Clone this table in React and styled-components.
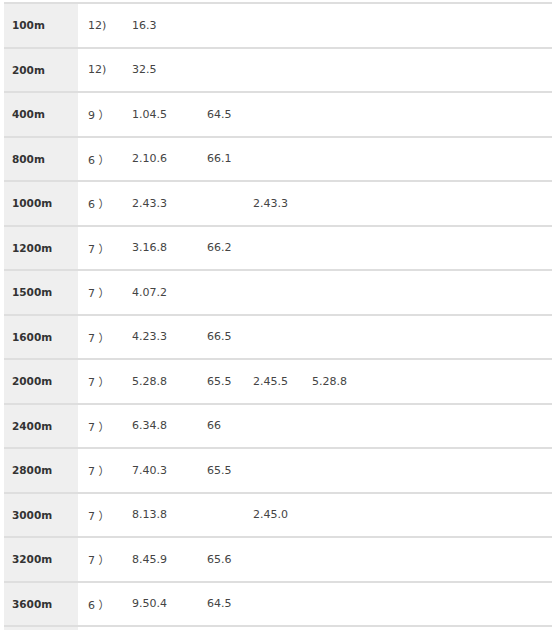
import React from 'react';
import styled, { createGlobalStyle } from 'styled-components';

const GlobalStyle = createGlobalStyle`
    body {
        margin: 0;
        background: #fff;
        font-family: "DejaVu Sans", "Noto Sans CJK JP", sans-serif;
    }
`;

const records = [
    ['100m', '12)', '16.3'],
    ['200m', '12)', '32.5'],
    ['400m', '9 ）', '1.04.5', '64.5'],
    ['800m', '6 ）', '2.10.6', '66.1'],
    ['1000m', '6 ）', '2.43.3', '', '2.43.3'],
    ['1200m', '7 ）', '3.16.8', '66.2'],
    ['1500m', '7 ）', '4.07.2'],
    ['1600m', '7 ）', '4.23.3', '66.5'],
    ['2000m', '7 ）', '5.28.8', '65.5', '2.45.5', '5.28.8'],
    ['2400m', '7 ）', '6.34.8', '66'],
    ['2800m', '7 ）', '7.40.3', '65.5'],
    ['3000m', '7 ）', '8.13.8', '', '2.45.0'],
    ['3200m', '7 ）', '8.45.9', '65.6'],
    ['3600m', '6 ）', '9.50.4', '64.5'],
    ['', ''],
];

const Wrapper = styled.div`
    padding: 2px 2px 0 4px;
    height: 630px;
    overflow: hidden;
    box-sizing: border-box;
`;

const Table = styled.div`
    width: 548px;
    border-top: 2px solid #dedede;
`;

const Row = styled.div`
    display: grid;
    grid-template-columns: 74px 44px 75px 46px 59px 1fr;
    height: 44.5px;
    border-bottom: 2px solid #dedede;
    box-sizing: border-box;
`;

const Head = styled.div`
    display: flex;
    align-items: center;
    padding-left: 8px;
    background: #efefef;
    color: #333;
    font-size: 10.5px;
    font-weight: bold;
`;

const Cell = styled.div`
    display: flex;
    align-items: center;
    padding-left: 10px;
    color: #444;
    font-size: 11px;
    white-space: nowrap;
`;

export default function App() {
    return (
        <>
            <GlobalStyle />
            <Wrapper>
                <Table>
                    {records.map(([dist, ...vals], i) => (
                        <Row key={i}>
                            <Head>{dist}</Head>
                            {[0, 1, 2, 3, 4].map((j) => (
                                <Cell key={j}>{vals[j] || ''}</Cell>
                            ))}
                        </Row>
                    ))}
                </Table>
            </Wrapper>
        </>
    );
}
